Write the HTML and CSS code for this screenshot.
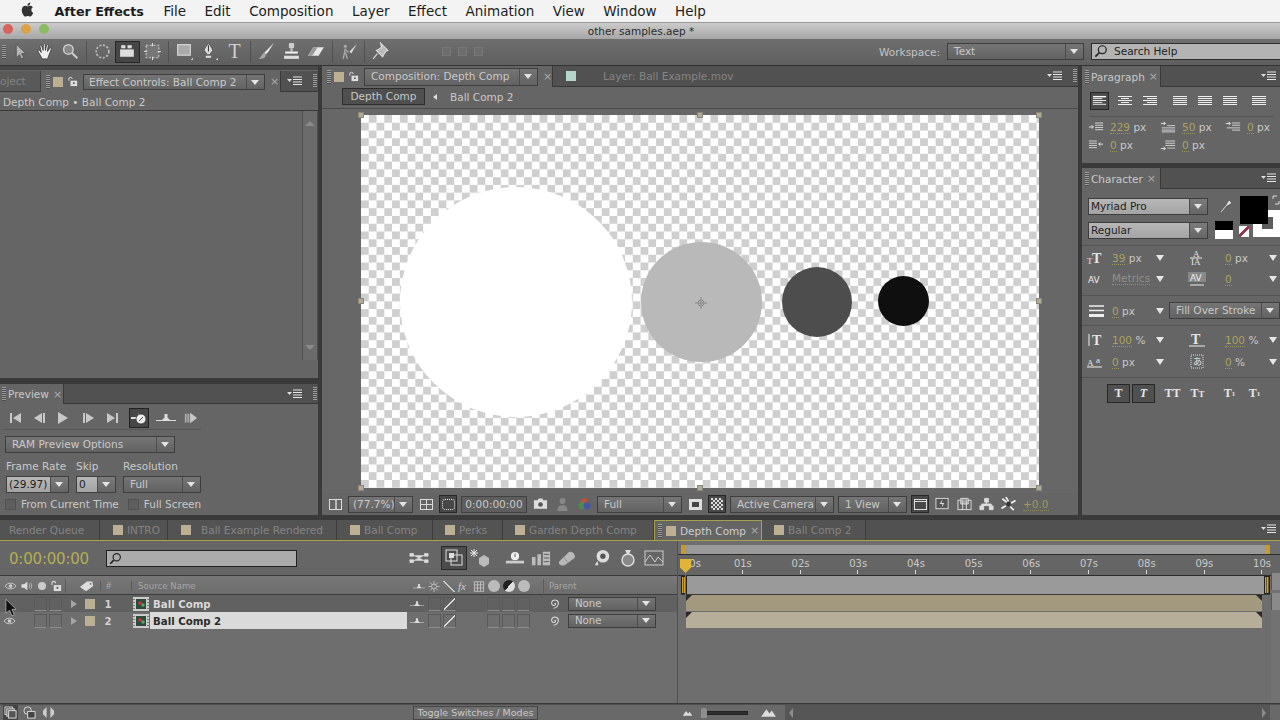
FILE: index.html
```html
<!DOCTYPE html>
<html lang="en">
<head>
  <meta charset="UTF-8" />
  <title>After Effects - other samples.aep</title>
  <meta name="viewport" content="width=device-width, initial-scale=1.0"/>
  <link rel="stylesheet" href="styles.css">
</head>
<body>

  <!-- shared icons -->
  <svg class="sprites" aria-hidden="true">
    <symbol id="i-apple" viewBox="0 0 24 24"><path d="M18.71 19.5c-.83 1.24-1.71 2.45-3.05 2.47-1.34.03-1.77-.79-3.29-.79-1.53 0-2 .77-3.27.82-1.31.05-2.3-1.32-3.14-2.53C4.25 17 2.94 12.45 4.7 9.39c.87-1.52 2.43-2.48 4.12-2.51 1.28-.02 2.5.87 3.29.87.78 0 2.26-1.07 3.8-.91.65.03 2.47.26 3.64 1.98-.09.06-2.17 1.28-2.15 3.81.03 3.02 2.65 4.03 2.68 4.04-.03.07-.42 1.44-1.38 2.83M13 3.5c.73-.83 1.94-1.46 2.94-1.5.13 1.17-.34 2.35-1.04 3.19-.69.85-1.83 1.51-2.95 1.42-.15-1.15.41-2.35 1.05-3.11z" fill="currentColor"/></symbol>
    <symbol id="i-arrow" viewBox="0 0 18 18"><path d="M5 2v13l3-3 2 4 2-1-2-4h4z" fill="#b4b4b4" stroke="#4a4a4a" stroke-width=".7"/></symbol>
    <symbol id="i-hand" viewBox="0 0 18 18"><path d="M6 16 2 9c-.5-1 1-1.800 1.800-.8L5 10 3.800 4c-.2-1.200 1.400-1.500 1.700-.3L6.800 8 7 2.500c0-1.300 1.700-1.300 1.700 0L9 8l1-5c.3-1.200 1.800-.9 1.600.3L10.800 9l2.200-3c.8-1 2-.1 1.400 1L12 13l-1 3z" fill="#eee" stroke="#333" stroke-width=".7"/></symbol>
    <symbol id="i-zoom" viewBox="0 0 18 18"><circle cx="7" cy="7" r="4.500" fill="#888" stroke="#ccc" stroke-width="1.400"/><path d="m10.500 10.500 5 5" stroke="#ccc" stroke-width="2"/></symbol>
    <symbol id="i-rotate" viewBox="0 0 18 18"><circle cx="9" cy="9" r="6" fill="none" stroke="#bbb" stroke-width="1.600" stroke-dasharray="2 1.500"/></symbol>
    <symbol id="i-camera" viewBox="0 0 18 18"><rect x="2" y="7" width="13" height="7" fill="#ddd"/><rect x="3" y="3" width="4" height="3" fill="#ddd"/><rect x="9" y="3" width="4" height="3" fill="#ddd"/></symbol>
    <symbol id="i-pan" viewBox="0 0 18 18"><rect x="3" y="3" width="12" height="12" fill="#777" stroke="#ccc" stroke-dasharray="2 1.500"/><path d="M1 9h3M14 9h3M9 1v3M9 14v3" stroke="#ddd"/></symbol>
    <symbol id="i-rect" viewBox="0 0 18 18"><rect x="2.500" y="2.500" width="12" height="10" fill="#aaa" stroke="#ddd"/><path d="M15 17h2v-2z" fill="#ddd"/></symbol>
    <symbol id="i-pen" viewBox="0 0 18 18"><path d="M8 1c1 2 4 5 4 7l-3 4H7L4 8c0-2 3-5 4-7z" fill="#ddd" stroke="#333" stroke-width=".6"/><path d="M8 3v6" stroke="#333"/><rect x="5.500" y="13" width="5" height="2" fill="#ddd"/><path d="M15 17h2v-2z" fill="#ddd"/></symbol>
    <symbol id="i-brush" viewBox="0 0 18 18"><path d="M16 1 9 8l-2 2 1.500 1.500 2-2z" fill="#eee"/><path d="M7 10c-2 .5-2 3-5 6 4 0 6.500-1.500 6.500-4.500z" fill="#aaa"/></symbol>
    <symbol id="i-stamp" viewBox="0 0 18 18"><rect x="6.500" y="1" width="5" height="5" rx="1" fill="#ccc"/><rect x="8" y="6" width="2" height="3" fill="#ccc"/><rect x="3" y="9" width="12" height="2" fill="#eee"/><rect x="2" y="13" width="14" height="3" fill="#ddd"/></symbol>
    <symbol id="i-eraser" viewBox="0 0 18 18"><path d="M6 5h10l-5 8H1z" fill="#e8e8e8"/><path d="M6 5 1 13h4l5-8z" fill="#999"/></symbol>
    <symbol id="i-roto" viewBox="0 0 18 18"><circle cx="6" cy="4" r="1.500" fill="#aaa"/><path d="M6 6 4 16M6 7l3 3M6 10l2 6" stroke="#aaa" stroke-width="1.300"/><path d="m17 2-7 7 1.500 2z" fill="#ddd"/></symbol>
    <symbol id="i-pin" viewBox="0 0 18 18"><path d="m9 1 7 7-2 1-2 3-1 2-6-6 2-1 3-2zM6 11l-4 5" fill="#bbb" stroke="#ddd"/></symbol>
    <symbol id="i-menu" viewBox="0 0 18 10"><path d="M2 3h5L4.500 6z" fill="#ddd"/><path d="M8 1h9M8 3.500h9M8 6h9M8 8.500h9" stroke="#e6e6e6"/></symbol>
    <symbol id="i-lock" viewBox="0 0 12 12"><rect x="3" y="5" width="8" height="6.500" fill="#ddd"/><rect x="6" y="7" width="2" height="2" fill="#555"/><path d="M1 5V3a2 2 0 0 1 4 0" fill="none" stroke="#ddd" stroke-width="1.200"/></symbol>
    <symbol id="i-search" viewBox="0 0 16 16"><circle cx="9.500" cy="6.500" r="4.500" fill="none" stroke="#222" stroke-width="1.400"/><path d="M6 10 1.500 14.500" stroke="#222" stroke-width="2"/></symbol>
    <symbol id="i-first" viewBox="0 0 14 12"><path d="M2 1h2v10H2zM13 1v10L5 6z" fill="#c8c8c8"/></symbol>
    <symbol id="i-prev" viewBox="0 0 14 12"><path d="M10 1v10L2 6zM11 1h2v10h-2z" fill="#c8c8c8"/></symbol>
    <symbol id="i-play" viewBox="0 0 14 12"><path d="M2 0v12l10-6z" fill="#c8c8c8"/></symbol>
    <symbol id="i-next" viewBox="0 0 14 12"><path d="M1 1h2v10H1zM4 1v10l8-5z" fill="#c8c8c8"/></symbol>
    <symbol id="i-last" viewBox="0 0 14 12"><path d="M1 1v10l8-5zM10 1h2v10h-2z" fill="#c8c8c8"/></symbol>
    <symbol id="i-loop" viewBox="0 0 16 14"><path d="M0 6h6l2-4v10L6 8H0z" fill="#ddd"/><circle cx="10" cy="8" r="5" fill="#eee" stroke="#222" stroke-width=".7"/><path d="m8 10 4-4M10 1l3 2" stroke="#444"/></symbol>
    <symbol id="i-audio" viewBox="0 0 20 10"><path d="M0 7h6l4-4 4 4h6v1H0zM8.500 1h3v3h-3z" fill="#ddd"/></symbol>
    <symbol id="i-ram" viewBox="0 0 16 12"><path d="M1 1h1v10H1zM3 1h1v10H3zM5 1h1v10H5zM7 0v12l8-6z" fill="#c8c8c8"/></symbol>
    <symbol id="i-left" viewBox="0 0 18 14"><rect x="2" y="1.500" width="14" height="2" fill="#fff" stroke="#333" stroke-width=".4"/><path d="M2 4.500h10M2 6.500h14M2 8.500h10M2 10.500h14" stroke="#eee"/></symbol>
    <symbol id="i-center" viewBox="0 0 18 14"><path d="M2 2.500h14M5 4.500h8M2 6.500h14M5 8.500h8M2 10.500h14" stroke="#eee"/></symbol>
    <symbol id="i-right" viewBox="0 0 18 14"><path d="M2 2.500h14M6 4.500h10M2 6.500h14M6 8.500h10M2 10.500h14" stroke="#eee"/></symbol>
    <symbol id="i-just" viewBox="0 0 18 14"><path d="M2 2.500h14M2 4.500h14M2 6.500h14M2 8.500h14M2 10.500h14" stroke="#eee"/></symbol>
    <symbol id="i-indl" viewBox="0 0 18 12"><path d="M1 6h5M4 4l2 2-2 2" stroke="#eee" fill="none"/><path d="M8 1.500h9M8 4h9M8 6.500h9M8 9h9" stroke="#ddd"/></symbol>
    <symbol id="i-indf" viewBox="0 0 18 12"><path d="M1 2h5M4 0l2 2-2 2" stroke="#eee" fill="none"/><path d="M8 4.500h9M2 7h15M2 9.500h15M2 11.500h15" stroke="#ddd"/></symbol>
    <symbol id="i-indt" viewBox="0 0 18 12"><path d="M1 2h5M4 0l2 2-2 2" stroke="#eee" fill="none"/><path d="M8 1.500h9M8 4h9M2 7h15M8 9.500h9" stroke="#ddd"/></symbol>
    <symbol id="i-indr" viewBox="0 0 18 12"><path d="M1 1.500h9M1 4h9M1 6.500h9M1 9h9" stroke="#ddd"/><path d="M17 5h-5M14 3l-2 2 2 2" stroke="#eee" fill="none"/></symbol>
    <symbol id="i-inda" viewBox="0 0 18 12"><path d="M1 10h5M4 8l2 2-2 2" stroke="#eee" fill="none"/><path d="M6 1.500h11M6 4h11M6 6.500h11" stroke="#ddd"/><path d="M8 9.500h9" stroke="#999" stroke-width="2"/></symbol>
    <symbol id="i-eye" viewBox="0 0 14 10"><path d="M1 5c3-4 9-4 12 0-3 4-9 4-12 0z" fill="none" stroke="#ccc"/><circle cx="7" cy="5" r="2" fill="#ccc"/></symbol>
    <symbol id="i-speaker" viewBox="0 0 14 12"><path d="M1 4h3l4-3v10L4 8H1z" fill="#ddd"/><path d="M10 3c1 2 1 4 0 6M12 2c1.500 2.500 1.500 5.500 0 8" stroke="#bbb" fill="none"/></symbol>
    <symbol id="i-tag" viewBox="0 0 18 14"><path d="M1 8 9 2h6l1 5-8 6z" fill="#ddd"/><circle cx="13" cy="4.500" r="1" fill="#666"/></symbol>
    <symbol id="i-comp" viewBox="0 0 16 14"><rect width="16" height="14" fill="#ccc"/><rect x="3" y="2" width="10" height="10" fill="#2d4a3a"/><circle cx="7" cy="6" r="1.800" fill="#c33"/><circle cx="10" cy="8" r="1.800" fill="#4a6"/><path d="M1 2v1M1 5v1M1 8v1M1 11v1M15 2v1M15 5v1M15 8v1M15 11v1" stroke="#333"/></symbol>
    <symbol id="i-spiral" viewBox="0 0 14 14"><path d="M7 7c1-1 2 1 0 2-3 1-4-3-2-5 3-2 7 0 6 4-1 3-3 4-5 4" fill="none" stroke="#ddd" stroke-width="1.100"/></symbol>
    <symbol id="i-star" viewBox="0 0 14 14"><circle cx="7" cy="7" r="3" fill="none" stroke="#ccc"/><path d="M7 0v4M7 10v4M0 7h4M10 7h4M2 2l3 3M9 9l3 3M12 2 9 5M5 9l-3 3" stroke="#ccc"/></symbol>
    <symbol id="i-film" viewBox="0 0 14 14"><rect x="1" y="1" width="12" height="12" fill="none" stroke="#ccc"/><path d="M1 5h12M1 9h12M5 1v12M9 1v12" stroke="#ccc"/></symbol>
    <symbol id="i-pill" viewBox="0 0 24 20"><path d="m3 14 11-11c4-2 9 3 7 7L10 18c-4 3-10-1-7-4z" fill="#b8b8b8"/><path d="M8 9c2 2 4 5 5 6" stroke="#888" fill="none"/></symbol>
    <symbol id="i-mount" viewBox="0 0 16 10"><path d="M1 9 6 2l3 4 2-3 4 6z" fill="#ddd"/></symbol>
    <symbol id="i-scene" viewBox="0 0 20 16"><rect x="1" y="1" width="18" height="14" fill="none" stroke="#ccc"/><path d="m1 12 5-7 5 7 3-5 5 5" fill="none" stroke="#ccc"/></symbol>
  </svg>

  <div class="menubar">
    <svg class="apple"><use href="#i-apple"/></svg>
    <span class="app-name">After Effects</span>
    <span>File</span><span>Edit</span><span>Composition</span><span>Layer</span>
    <span>Effect</span><span>Animation</span><span>View</span><span>Window</span><span>Help</span>
  </div>

  <div class="titlebar">
    <div class="lights"><i class="light red"></i><i class="light amber"></i><i class="light green"></i></div>
    <span class="doc-title">other samples.aep *</span>
  </div>

  <div class="toolbar">
    <span class="grip"></span>
    <div class="tools">
      <span class="tool"><svg><use href="#i-arrow"/></svg></span>
      <span class="tool"><svg><use href="#i-hand"/></svg></span>
      <span class="tool"><svg><use href="#i-zoom"/></svg></span>
    </div>
    <div class="tools">
      <span class="tool"><svg><use href="#i-rotate"/></svg></span>
      <span class="tool on"><svg><use href="#i-camera"/></svg></span>
      <span class="tool"><svg><use href="#i-pan"/></svg></span>
    </div>
    <div class="tools">
      <span class="tool"><svg><use href="#i-rect"/></svg></span>
      <span class="tool"><svg><use href="#i-pen"/></svg></span>
      <span class="tool type-tool">T</span>
    </div>
    <div class="tools">
      <span class="tool"><svg><use href="#i-brush"/></svg></span>
      <span class="tool"><svg><use href="#i-stamp"/></svg></span>
      <span class="tool"><svg><use href="#i-eraser"/></svg></span>
    </div>
    <div class="tools"><span class="tool"><svg><use href="#i-roto"/></svg></span></div>
    <div class="tools last"><span class="tool"><svg><use href="#i-pin"/></svg></span></div>
    <div class="axis-modes"><i></i><i></i><i></i></div>
    <span class="workspace-label">Workspace:</span>
    <div class="dd workspace-dd"><span class="dd-text">Text</span><span class="dd-arrow"></span></div>
    <div class="help-search"><svg><use href="#i-search"/></svg><span>Search Help</span></div>
  </div>

  <div class="workspace">

    <!-- left column -->
    <div class="left-col">
      <section class="panel effects">
        <div class="tabbar">
          <span class="tab dim project-tab">oject</span>
          <div class="tab active fx-tab">
            <span class="grip"></span>
            <i class="swatch"></i>
            <svg class="lock"><use href="#i-lock"/></svg>
            <div class="dd fx-dd"><span class="dd-text">Effect Controls: Ball Comp 2</span><span class="dd-arrow"></span></div>
            <span class="close">×</span>
          </div>
          <svg class="panel-menu"><use href="#i-menu"/></svg>
          <span class="grip end"></span>
        </div>
        <div class="crumb">Depth Comp • Ball Comp 2</div>
        <div class="fx-body">
          <div class="fx-list"></div>
          <div class="vscroll"><i class="up"></i><i class="down"></i></div>
        </div>
      </section>

      <section class="panel preview">
        <div class="tabbar">
          <div class="tab active preview-tab"><span class="grip"></span>Preview <span class="close">×</span></div>
          <svg class="panel-menu"><use href="#i-menu"/></svg>
          <span class="grip end"></span>
        </div>
        <div class="transport">
          <span class="ctl"><svg><use href="#i-first"/></svg></span>
          <span class="ctl"><svg><use href="#i-prev"/></svg></span>
          <span class="ctl"><svg><use href="#i-play"/></svg></span>
          <span class="ctl push"><svg><use href="#i-next"/></svg></span>
          <span class="ctl"><svg><use href="#i-last"/></svg></span>
          <span class="ctl loop"><svg><use href="#i-loop"/></svg></span>
          <span class="ctl wide"><svg class="audio"><use href="#i-audio"/></svg></span>
          <span class="ctl"><svg><use href="#i-ram"/></svg></span>
        </div>
        <div class="dd ram-dd"><span class="dd-text">RAM Preview Options</span><span class="dd-arrow"></span></div>
        <div class="rate-grid">
          <label>Frame Rate</label><label>Skip</label><label>Resolution</label>
          <div class="dd light-dd"><span class="dd-text">(29.97)</span><span class="dd-arrow"></span></div>
          <div class="dd light-dd"><span class="dd-text">0</span><span class="dd-arrow"></span></div>
          <div class="dd"><span class="dd-text">Full</span><span class="dd-arrow"></span></div>
        </div>
        <div class="checks">
          <i class="check"></i><span>From Current Time</span>
          <i class="check"></i><span>Full Screen</span>
        </div>
      </section>
    </div>

    <!-- composition viewer -->
    <section class="panel comp">
      <div class="tabbar comp-tabs">
        <div class="tab active comp-tab">
          <span class="grip"></span>
          <i class="swatch"></i>
          <svg class="lock"><use href="#i-lock"/></svg>
          <div class="dd comp-dd"><span class="dd-text">Composition: Depth Comp</span><span class="dd-arrow"></span></div>
          <span class="close">×</span>
        </div>
        <div class="tab dim layer-tab"><i class="swatch mint"></i><span>Layer: Ball Example.mov</span></div>
        <svg class="panel-menu"><use href="#i-menu"/></svg>
        <span class="grip end"></span>
      </div>
      <div class="comp-crumbs">
        <span class="crumb-btn">Depth Comp</span>
        <i class="tri-left"></i>
        <span>Ball Comp 2</span>
      </div>
      <div class="viewer">
        <div class="canvas">
          <i class="handle tl"></i><i class="handle tc"></i><i class="handle tr"></i>
          <i class="handle ml"></i><i class="handle mr"></i>
          <i class="handle bl"></i><i class="handle bc"></i><i class="handle br"></i>
          <i class="ball ball-white"></i>
          <i class="ball ball-grey"></i>
          <i class="ball ball-dark"></i>
          <i class="ball ball-black"></i>
          <svg class="anchor" viewBox="0 0 12 12"><circle cx="6" cy="6" r="3" fill="none" stroke="#888"/><path d="M6 0v12M0 6h12" stroke="#888"/></svg>
        </div>
      </div>
      <div class="viewer-bar">
        <span class="vb"><i class="ic-region"></i></span>
        <div class="dd zoom-dd"><span class="dd-text">(77.7%)</span><span class="dd-arrow"></span></div>
        <span class="vb"><i class="ic-grid"></i></span>
        <span class="vb on"><i class="ic-mask"></i></span>
        <span class="time-box">0:00:00:00</span>
        <span class="vb"><svg viewBox="0 0 16 12"><path d="M1 2h4l1-2h4l1 2h4v9H1z" fill="#ddd"/><circle cx="8" cy="6.500" r="2.500" fill="#555"/></svg></span>
        <span class="vb"><svg viewBox="0 0 14 14"><circle cx="7" cy="4" r="3" fill="#888"/><path d="M2 14c0-4 2-6 5-6s5 2 5 6z" fill="#888"/></svg></span>
        <span class="vb"><svg viewBox="0 0 16 16"><circle cx="8" cy="5" r="4" fill="#b5563c"/><circle cx="5" cy="10" r="4" fill="#4b8b4e"/><circle cx="11" cy="10" r="4" fill="#4a55a8"/></svg></span>
        <div class="dd res-dd"><span class="dd-text">Full</span><span class="dd-arrow"></span></div>
        <span class="vb"><i class="ic-fast"></i></span>
        <span class="vb on"><i class="ic-checker"></i></span>
        <div class="dd cam-dd"><span class="dd-text">Active Camera</span><span class="dd-arrow"></span></div>
        <div class="dd view-dd"><span class="dd-text">1 View</span><span class="dd-arrow"></span></div>
        <span class="vb on"><i class="ic-frame"></i></span>
        <span class="vb"><svg viewBox="0 0 16 14"><rect x="1" y="1" width="13" height="11" fill="#555" stroke="#ddd"/><path d="m8 2-3 5h3l-1 4 3-5H7z" fill="#ddd"/></svg></span>
        <span class="vb"><svg viewBox="0 0 16 14"><rect x="1" y="3" width="14" height="10" fill="none" stroke="#ddd"/><path d="M4 1h8v6H4zM6 3v10M10 3v10" fill="#999" stroke="#ddd"/></svg></span>
        <span class="vb"><svg viewBox="0 0 16 14"><path d="M6 1h4v4H6zM1 9h4v4H1zM11 9h4v4h-4zM8 5v2M3 9V7h10v2" fill="#ddd" stroke="#ddd"/></svg></span>
        <span class="vb"><svg viewBox="0 0 16 16"><circle cx="8" cy="8" r="2.500" fill="#333"/><path d="M8 5 5 0M11 7l5-3M10 11l4 4M5 10l-5 3M1 2l5 4" stroke="#eee" stroke-width="2"/></svg></span>
        <span class="exposure">+0.0</span>
      </div>
    </section>

    <!-- right column -->
    <div class="right-col">
      <section class="panel paragraph">
        <div class="tabbar">
          <div class="tab active"><span class="grip"></span>Paragraph <span class="close">×</span></div>
          <svg class="panel-menu"><use href="#i-menu"/></svg>
        </div>
        <div class="align-row">
          <span class="abtn on"><svg><use href="#i-left"/></svg></span>
          <span class="abtn"><svg><use href="#i-center"/></svg></span>
          <span class="abtn"><svg><use href="#i-right"/></svg></span>
          <span class="abtn gap"><svg><use href="#i-just"/></svg></span>
          <span class="abtn"><svg><use href="#i-just"/></svg></span>
          <span class="abtn"><svg><use href="#i-just"/></svg></span>
          <span class="abtn gap"><svg><use href="#i-just"/></svg></span>
        </div>
        <div class="para-grid">
          <svg><use href="#i-indl"/></svg><span><b class="num">229</b> px</span>
          <svg><use href="#i-indf"/></svg><span><b class="num">50</b> px</span>
          <svg><use href="#i-indt"/></svg><span><b class="num">0</b> px</span>
          <svg><use href="#i-indr"/></svg><span><b class="num">0</b> px</span>
          <svg><use href="#i-inda"/></svg><span><b class="num">0</b> px</span>
        </div>
      </section>

      <section class="panel character">
        <div class="tabbar">
          <div class="tab active"><span class="grip"></span>Character <span class="close">×</span></div>
          <svg class="panel-menu"><use href="#i-menu"/></svg>
        </div>
        <div class="font-block">
          <div class="dd light-dd font-dd"><span class="dd-text">Myriad Pro</span><span class="dd-arrow"></span></div>
          <div class="dd light-dd font-dd"><span class="dd-text">Regular</span><span class="dd-arrow"></span></div>
          <svg class="dropper" viewBox="0 0 14 16"><path d="m10 1 3 3-3 2-2 1-6 7-1-1 6-7 1-2z" fill="#ddd" stroke="#333" stroke-width=".5"/></svg>
          <i class="fill-stroke black"></i><i class="fill-stroke white"></i>
          <i class="stroke-none"></i>
          <i class="color-back"></i><i class="color-front"></i><i class="color-notch"></i>
          <svg class="swap" viewBox="0 0 8 10"><path d="M1 4V1h4M7 6v3H3" fill="none" stroke="#ddd"/></svg>
        </div>
        <div class="char-rows">
          <svg class="ci" viewBox="0 0 18 16"><text x="5" y="13" class="t-lg">T</text><text x="0" y="14" class="t-sm">T</text></svg><span><b class="num">39</b> px</span><i class="tri"></i>
          <svg class="ci" viewBox="0 0 18 16"><text x="5" y="7" class="t-sm">A</text><text x="3" y="15" class="t-sm">IA</text><path d="M2 8h12" stroke="#eee"/></svg><span><b class="num">0</b> px</span><i class="tri"></i>

          <svg class="ci" viewBox="0 0 18 16"><text x="1" y="12" class="t-av">AV</text></svg><span class="metrics">Metrics</span><i class="tri"></i>
          <svg class="ci" viewBox="0 0 18 16"><rect y="1" width="18" height="10" fill="#888"/><text x="2" y="10" class="t-av">AV</text><path d="M2 14h14" stroke="#eee"/></svg><span><b class="num">0</b></span><i class="tri"></i>
        </div>
        <div class="stroke-row">
          <svg class="ci" viewBox="0 0 18 14"><path d="M2 2h15M2 6.500h15" stroke="#eee" stroke-width="1.500"/><path d="M2 11.500h15" stroke="#eee" stroke-width="3"/></svg>
          <span><b class="num">0</b> px</span><i class="tri"></i>
          <div class="dd stroke-dd"><span class="dd-text">Fill Over Stroke</span><span class="dd-arrow"></span></div>
        </div>
        <div class="char-rows scale-rows">
          <svg class="ci" viewBox="0 0 18 16"><text x="5" y="13" class="t-lg">T</text><path d="M2 2v12" stroke="#eee"/></svg><span><b class="num">100</b> %</span><i class="tri"></i>
          <svg class="ci" viewBox="0 0 18 16"><text x="3" y="12" class="t-lg">T</text><path d="M1 14h16" stroke="#eee"/></svg><span><b class="num">100</b> %</span><i class="tri"></i>

          <svg class="ci" viewBox="0 0 18 16"><text x="0" y="12" class="t-sm">A</text><text x="9" y="9" class="t-sm">a</text><path d="M0 13h15" stroke="#eee"/></svg><span><b class="num">0</b> px</span><i class="tri"></i>
          <svg class="ci" viewBox="0 0 18 16"><rect x="3" y="1" width="12" height="13" fill="none" stroke="#ddd" stroke-dasharray="1 1"/><text x="5" y="11" class="t-sm">あ</text></svg><span><b class="num">0</b> %</span><i class="tri"></i>
        </div>
        <div class="style-row">
          <span class="sbtn on">T</span><span class="sbtn on ital">T</span>
          <span class="sbtn">TT</span><span class="sbtn caps">T<small>T</small></span>
          <span class="sbtn far">T<sup>1</sup></span><span class="sbtn">T<sub>1</sub></span>
        </div>
      </section>
    </div>
  </div>

  <!-- timeline -->
  <div class="tl-tabs">
    <span class="tl-tab first">Render Queue</span>
    <span class="tl-tab t-intro"><i class="swatch"></i>INTRO</span>
    <span class="tl-tab t-example"><i class="swatch"></i>Ball Example Rendered</span>
    <span class="tl-tab t-ball"><i class="swatch"></i>Ball Comp</span>
    <span class="tl-tab t-perks"><i class="swatch"></i>Perks</span>
    <span class="tl-tab t-garden"><i class="swatch"></i>Garden Depth Comp</span>
    <span class="tl-tab current"><span class="grip"></span><i class="swatch"></i>Depth Comp <span class="close">×</span></span>
    <span class="tl-tab t-ball2"><i class="swatch"></i>Ball Comp 2</span>
    <svg class="panel-menu"><use href="#i-menu"/></svg>
  </div>

  <div class="timeline">
    <div class="tl-left">
      <div class="tl-controls">
        <span class="timecode">0:00:00:00</span>
        <div class="layer-search"><svg><use href="#i-search"/></svg></div>
        <div class="tl-switches">
          <span class="sw"><svg viewBox="0 0 22 14"><path d="M1 2h4v3H1zM1 9h4v3H1zM17 2h4v3h-4zM17 9h4v3h-4zM5 4l6 3 6-3M5 10l6-3 6 3" fill="#ddd" stroke="#ddd" stroke-width=".8"/></svg></span>
          <span class="sw on sep"><svg viewBox="0 0 18 18"><rect x="1" y="1" width="11" height="11" fill="none" stroke="#ddd"/><rect x="6" y="6" width="11" height="10" fill="none" stroke="#ddd"/><rect x="4" y="4" width="5" height="5" fill="#ddd"/></svg></span>
          <span class="sw"><svg viewBox="0 0 20 18"><path d="M4 0v8M0 4h8M1 1l6 6M7 1 1 7" stroke="#eee"/><path d="m9 9 5-3 5 3v6l-5 3-5-3z" fill="#bbb"/></svg></span>
          <span class="sw sep"><svg viewBox="0 0 22 16"><circle cx="11" cy="6" r="4.500" fill="#eee"/><path d="M1 11h20v3H1z" fill="#ccc"/><path d="M11 3v4" stroke="#555"/></svg></span>
          <span class="sw"><svg viewBox="0 0 22 18"><path d="M1 8h4v9H1zM7 5h4v12H7zM13 2h8v15h-8z" fill="#bbb"/><path d="M14 5h6M14 9h6M14 13h6" stroke="#555"/></svg></span>
          <span class="sw"><svg><use href="#i-pill"/></svg></span>
          <span class="sw sep"><svg viewBox="0 0 20 20"><circle cx="11" cy="8" r="7" fill="#ddd"/><circle cx="11" cy="8" r="3" fill="#555"/><path d="M5 13 2 18h4z" fill="#ddd"/></svg></span>
          <span class="sw"><svg viewBox="0 0 16 18"><circle cx="8" cy="11" r="6" fill="#888" stroke="#ddd" stroke-width="1.500"/><path d="M5 1h6l-2 4H7z" fill="#ddd"/></svg></span>
          <span class="sw"><svg><use href="#i-scene"/></svg></span>
        </div>
      </div>

      <div class="col-head">
        <div class="head-a">
          <svg><use href="#i-eye"/></svg>
          <svg><use href="#i-speaker"/></svg>
          <i class="dot"></i>
          <svg class="lk"><use href="#i-lock"/></svg>
        </div>
        <svg class="tag"><use href="#i-tag"/></svg>
        <span class="hash">#</span>
        <span class="src-name">Source Name</span>
        <div class="head-b">
          <svg><use href="#i-audio"/></svg>
          <svg><use href="#i-star"/></svg>
          <i class="slash"></i>
          <em>fx</em>
          <svg><use href="#i-film"/></svg>
          <i class="round lt"></i>
          <i class="round half"></i>
          <i class="round lt"></i>
        </div>
        <span class="parent-label">Parent</span>
      </div>

      <div class="layer odd">
        <i class="box clear"></i><i class="box clear"></i><i class="box"></i><i class="box"></i>
        <i class="twirl"></i><i class="swatch"></i><b class="idx">1</b>
        <svg class="comp-ic"><use href="#i-comp"/></svg>
        <span class="lname">Ball Comp</span>
        <svg class="shy"><use href="#i-audio"/></svg>
        <i class="box"></i>
        <i class="box slashed"></i>
        <i></i>
        <i class="box"></i><i class="box"></i><i class="box"></i>
        <i></i>
        <svg class="spiral"><use href="#i-spiral"/></svg>
        <div class="dd parent-dd"><span class="dd-text">None</span><span class="dd-arrow"></span></div>
      </div>
      <div class="layer">
        <svg class="eye"><use href="#i-eye"/></svg><i class="box clear"></i><i class="box"></i><i class="box"></i>
        <i class="twirl"></i><i class="swatch"></i><b class="idx">2</b>
        <svg class="comp-ic"><use href="#i-comp"/></svg>
        <span class="lname sel">Ball Comp 2</span>
        <svg class="shy"><use href="#i-audio"/></svg>
        <i class="box"></i>
        <i class="box slashed"></i>
        <i></i>
        <i class="box"></i><i class="box"></i><i class="box"></i>
        <i></i>
        <svg class="spiral"><use href="#i-spiral"/></svg>
        <div class="dd parent-dd"><span class="dd-text">None</span><span class="dd-arrow"></span></div>
      </div>
    </div>

    <div class="tl-right">
      <div class="work-bar"><i class="cap"></i><i class="cap"></i></div>
      <div class="ruler">
        <span>00s</span><span>01s</span><span>02s</span><span>03s</span><span>04s</span><span>05s</span>
        <span>06s</span><span>07s</span><span>08s</span><span>09s</span><span>10s</span>
      </div>
      <div class="work-area"><i class="cap tall"></i><i class="cap tall"></i></div>
      <div class="track odd"><div class="clip"></div></div>
      <div class="track"><div class="clip lite"></div></div>
      <div class="rail"><i class="rail-btn"></i><i class="rail-btn"></i></div>
    </div>

    <!-- current time indicator -->
    <div class="playhead"><i class="cti"></i></div>
  </div>

  <div class="statusbar">
    <div class="status-icons">
      <span class="sq on"><svg viewBox="0 0 14 14"><rect x="1" y="1" width="8" height="8" fill="none" stroke="#ddd"/><rect x="3" y="3" width="8" height="8" fill="#666" stroke="#ddd"/><rect x="5" y="5" width="8" height="8" fill="#555" stroke="#ddd"/></svg></span>
      <span class="sq"><svg viewBox="0 0 14 14"><circle cx="5" cy="5" r="4" fill="none" stroke="#ddd"/><rect x="5" y="6" width="8" height="7" fill="#444" stroke="#ddd"/></svg></span>
      <span class="sq"><svg viewBox="0 0 14 14"><path d="M5 1 1 5v4l4 4zM9 1l4 4v4l-4 4z" fill="#ccc"/></svg></span>
    </div>
    <span class="toggle-btn">Toggle Switches / Modes</span>
    <div class="tl-zoom">
      <svg class="m-sm"><use href="#i-mount"/></svg>
      <div class="slider"><i></i></div>
      <svg class="m-lg"><use href="#i-mount"/></svg>
    </div>
    <div class="hscroll"><i class="sl"></i><i class="sr"></i></div>
  </div>

  <!-- mouse pointer from the recording -->
  <svg class="pointer" viewBox="0 0 14 20"><path d="M1 1v15l4-3 2.500 6 2.500-1-2.500-6H12z" fill="#111" stroke="#ddd" stroke-width=".6"/></svg>

</body>
</html>
```

FILE: styles.css
```css
* {
  box-sizing: border-box;
}
html, body {
  margin: 0;
  padding: 0;
}
body {
  width: 1280px;
  height: 720px;
  overflow: hidden;
  position: relative;
  background: #3a3a3a;
  font-family: 'DejaVu Sans', sans-serif;
  font-size: 10.5px;
  color: #c9c9c9;
}
svg {
  display: block;
}
.sprites {
  display: none;
}
i {
  font-style: normal;
}

/* system bars */
.menubar {
  height: 23px;
  background: #f3f3f3;
  border-bottom: 1px solid #9a9a9a;
  display: flex;
  align-items: center;
  gap: 18.5px;
  padding-left: 19px;
  font-size: 13.5px;
  color: #1c1c1c;
}
.apple {
  width: 17px;
  height: 17px;
  color: #333;
  margin-top: -3px;
}
.app-name {
  font-weight: bold;
  font-size: 12.7px;
  margin-right: 1px;
}
.titlebar {
  height: 17px;
  background: linear-gradient(#cbcbcb, #a6a6a6);
  border-bottom: 1px solid #6d6d6d;
  position: relative;
  display: flex;
  justify-content: center;
  align-items: center;
  font-size: 10.5px;
  color: #2b2b2b;
}
.lights {
  position: absolute;
  left: 3px;
  top: 1px;
  display: flex;
  gap: 8px;
}
.light {
  width: 10px;
  height: 10px;
  border-radius: 50%;
}
.light.red { background: #d9625d; }
.light.amber { background: #dca24a; }
.light.green { background: #8fbb62; }
.doc-title {
  margin-left: 2px;
}

.toolbar {
  height: 25px;
  background: linear-gradient(#6e6e6e, #5f5f5f);
  display: flex;
  align-items: center;
  padding: 0 0 2px 2px;
}
.grip {
  width: 4px;
  height: 14px;
  flex: none;
  background: repeating-linear-gradient(#a0a0a0 0 1px, #4d4d4d 1px 2px);
}
.tools {
  display: flex;
  padding-right: 3px;
  margin-right: 3px;
  border-right: 1px solid #525252;
  height: 22px;
}
.toolbar > .grip + .tools {
  margin-left: 2px;
}
.tools.last {
  border-right: 0;
}
.tool {
  width: 25px;
  height: 22px;
  display: flex;
  justify-content: center;
  align-items: center;
}
.tool svg {
  width: 19px;
  height: 19px;
}
.tool.on {
  background: #464646;
  border: 1px solid #262626;
}
.type-tool {
  font-family: 'Liberation Serif', serif;
  font-size: 20px;
  color: #d0d0d0;
}
.axis-modes {
  display: flex;
  gap: 7px;
  margin-left: 43px;
}
.axis-modes i {
  width: 9px;
  height: 9px;
  background: #6d6d6d;
  border: 1px solid #777;
}
.workspace-label {
  margin-left: auto;
  margin-right: 7px;
  color: #c4c4c4;
}
.workspace-dd {
  width: 137px;
  margin-right: 7px;
}
.help-search {
  width: 189px;
  height: 17px;
  background: #b4b4b4;
  border: 1px solid #2e2e2e;
  border-right: 0;
  display: flex;
  align-items: center;
  gap: 6px;
  padding-left: 2px;
  color: #222;
  margin-top: -1px;
}
.help-search svg {
  width: 14px;
  height: 14px;
}

/* dropdowns */
.dd {
  height: 17px;
  display: flex;
  align-items: stretch;
  background: linear-gradient(#757575, #626262);
  border: 1px solid #3e3e3e;
  color: #c9c9c9;
}
.dd-text {
  flex: 1;
  padding-left: 6px;
  line-height: 15px;
  white-space: nowrap;
  overflow: hidden;
}
.dd-arrow {
  width: 18px;
  flex: none;
  position: relative;
  border-left: 1px solid #4d4d4d;
}
.dd-arrow::after {
  content: "";
  position: absolute;
  left: 4px;
  top: 5px;
  border: 4px solid transparent;
  border-top: 5px solid #e4e4e4;
  border-bottom: 0;
}
.light-dd .dd-text {
  padding-left: 2px;
  background: linear-gradient(#b7b7b7, #a4a4a4);
  color: #222;
}
.light-dd .dd-arrow {
  background: linear-gradient(#7b7b7b, #666);
}

/* panels */
.workspace {
  height: 450px;
  display: grid;
  grid-template-columns: 318px 756px 198px;
  column-gap: 4px;
  border-top: 1px solid #333;
}
.panel {
  background: #656565;
  display: flex;
  flex-direction: column;
  min-height: 0;
}
.tabbar {
  height: 21px;
  flex: none;
  background: #515151;
  border-bottom: 1px solid #383838;
  display: flex;
  align-items: stretch;
  position: relative;
}
.tab {
  display: flex;
  align-items: center;
  white-space: nowrap;
}
.tab.active {
  background: #656565;
  border-right: 1px solid #3a3a3a;
  margin-bottom: -1px;
  padding-right: 5px;
  gap: 5px;
}
.tab.active > .grip {
  margin-right: -2px;
}
.tab.dim {
  color: #848484;
}
.close {
  color: #a9a9a9;
  font-size: 11px;
}
.panel-menu {
  width: 18px;
  height: 10px;
  position: absolute;
  right: 15px;
  top: 5px;
}
.grip.end {
  position: absolute;
  right: 1px;
  top: 3px;
}
.swatch {
  width: 10px;
  height: 10px;
  flex: none;
  background: #bdaf93;
}
.swatch.mint {
  background: #b5d4cc;
}
.lock {
  width: 10px;
  height: 11px;
  flex: none;
}

.left-col {
  display: flex;
  flex-direction: column;
  gap: 6px;
  min-height: 0;
}
.effects {
  height: 312px;
  padding-top: 5px;
  background: linear-gradient(#484848 0 4px, #656565 4px);
}
.project-tab {
  width: 41px;
  background: #595959;
  border-right: 1px solid #414141;
}
.fx-tab {
  padding-left: 5px;
  width: 240px;
}
.fx-dd {
  width: 182px;
  height: 16px;
  flex: none;
}
.fx-dd .dd-text {
  padding-left: 5px;
  line-height: 14px;
}
.crumb {
  height: 19px;
  flex: none;
  padding: 4px 3px 0;
  border-bottom: 1px solid #393939;
}
.fx-body {
  flex: 1;
  display: flex;
}
.fx-list {
  flex: 1;
}
.vscroll {
  width: 16px;
  margin-bottom: 18px;
  background: #6b6b6b;
  border-left: 1px solid #4f4f4f;
  border-right: 1px solid #4f4f4f;
  display: flex;
  flex-direction: column;
  justify-content: space-between;
  padding: 5px 2px;
}
.up, .down {
  border: 5px solid transparent;
  width: 0;
  height: 0;
}
.up { border-bottom-color: #8a8a8a; }
.down { border-top-color: #8a8a8a; }

.preview {
  flex: 1;
}
.preview .tabbar {
  height: 20px;
}
.preview-tab {
  width: 64px;
  padding-left: 2px;
  gap: 4px !important;
}
.transport {
  display: flex;
  align-items: center;
  margin: 2px 117px 0 3px;
  height: 24px;
  border-bottom: 1px solid #555;
}
.ctl {
  width: 24px;
  height: 20px;
  flex: none;
  display: flex;
  justify-content: center;
  align-items: center;
}
.ctl.push {
  margin-left: 2px;
}
.ctl.wide {
  width: 26px;
}
.ctl svg {
  width: 14px;
  height: 12px;
}
.ctl.loop {
  background: #474747;
  border: 1px solid #222;
  width: 20px;
  margin: 0 4px;
}
.ctl.loop svg {
  width: 16px;
  height: 14px;
}
.ctl .audio {
  width: 20px;
  height: 10px;
}
.ram-dd {
  width: 170px;
  margin: 6px 0 0 5px;
}
.rate-grid {
  display: grid;
  grid-template-columns: 63px 40px 78px;
  column-gap: 7px;
  row-gap: 3px;
  margin: 6px 0 0 6px;
  line-height: 14px;
}
.checks {
  display: flex;
  align-items: center;
  margin: 5px 0 0 5px;
  gap: 5px;
}
.check {
  width: 11px;
  height: 11px;
  border: 1px solid #505050;
  background: #5e5e5e;
}
.checks .check:nth-of-type(2) {
  margin-left: 4px;
}

/* composition */
.comp-tab {
  width: 231px;
  padding-left: 5px;
}
.comp-dd {
  width: 174px;
  height: 18px;
  flex: none;
}
.layer-tab {
  padding-left: 13px;
  gap: 27px;
}
.comp-crumbs {
  height: 22px;
  flex: none;
  display: flex;
  align-items: center;
  padding: 0 0 2px 20px;
  border-bottom: 1px solid #4c4c4c;
}
.crumb-btn {
  width: 83px;
  height: 17px;
  background: #4f4f4f;
  border: 1px solid #2d2d2d;
  text-align: center;
  line-height: 15px;
}
.tri-left {
  border: 3px solid transparent;
  border-right: 4px solid #ddd;
  border-left: 0;
  margin: 0 13px 0 8px;
}
.viewer {
  flex: 1;
  display: flex;
  justify-content: center;
  align-items: flex-start;
  padding-top: 6px;
  background: #676767;
  min-height: 0;
}
.canvas {
  width: 678px;
  height: 373px;
  position: relative;
  background-color: #fff;
  background-image: conic-gradient(#cfcfcf 25%, #fff 0 50%, #cfcfcf 0 75%, #fff 0);
  background-size: 15.54px 15.54px;
}
.handle {
  position: absolute;
  width: 6px;
  height: 6px;
  background: #b1ab97;
  border: 1px solid #8a8678;
}
.handle.tl { left: -3px; top: -3px; }
.handle.tc { left: 336px; top: -3px; }
.handle.tr { right: -3px; top: -3px; }
.handle.ml { left: -3px; top: 183px; }
.handle.mr { right: -3px; top: 183px; }
.handle.bl { left: -3px; bottom: -3px; }
.handle.bc { left: 336px; bottom: -3px; }
.handle.br { right: -3px; bottom: -3px; }
.ball {
  position: absolute;
  border-radius: 50%;
}
.ball-white {
  left: 39px;
  top: 72px;
  width: 232px;
  height: 230px;
  background: #fff;
}
.ball-grey {
  left: 280px;
  top: 127px;
  width: 121px;
  height: 120px;
  background: #b9b9b9;
}
.ball-dark {
  left: 421px;
  top: 152px;
  width: 70px;
  height: 70px;
  background: #4d4d4d;
}
.ball-black {
  left: 517px;
  top: 161px;
  width: 51px;
  height: 50px;
  background: #0f0f0f;
}
.anchor {
  position: absolute;
  left: 334px;
  top: 182px;
  width: 12px;
  height: 12px;
}
.viewer-bar {
  height: 22px;
  flex: none;
  display: flex;
  align-items: center;
  gap: 4px;
  padding-left: 4px;
  background: #656565;
}
.vb {
  width: 18px;
  height: 18px;
  flex: none;
  display: flex;
  justify-content: center;
  align-items: center;
}
.vb svg {
  width: 15px;
  height: 14px;
}
.vb.on {
  background: #474747;
  border: 1px solid #272727;
}
.vb i {
  display: block;
}
.ic-region {
  width: 13px;
  height: 11px;
  border: 1px solid #ddd;
  background: linear-gradient(90deg, transparent 0 50%, #bbb 50% 60%, transparent 60%);
}
.ic-grid {
  width: 13px;
  height: 11px;
  border: 1px solid #ddd;
  background: linear-gradient(#ddd, #ddd) center / 100% 1px no-repeat, linear-gradient(#ddd, #ddd) center / 1px 100% no-repeat;
}
.ic-mask {
  width: 13px;
  height: 11px;
  border: 1px dotted #eee;
  border-radius: 3px;
}
.ic-fast {
  width: 13px;
  height: 11px;
  background: #ddd;
  border: 3px solid #ddd;
  box-shadow: inset 0 0 0 5px #444;
}
.ic-checker {
  width: 12px;
  height: 12px;
  background: conic-gradient(#555 25%, #ddd 0 50%, #555 0 75%, #ddd 0) 0 0 / 4px 4px;
}
.ic-frame {
  width: 13px;
  height: 11px;
  border: 1px solid #ddd;
  border-top: 3px double #ddd;
}
.time-box {
  width: 66px;
  height: 17px;
  background: #5e5e5e;
  border: 1px solid #414141;
  text-align: center;
  line-height: 15px;
  flex: none;
}
.zoom-dd { width: 65px; flex: none; }
.zoom-dd .dd-text { padding-left: 4px; }
.res-dd { width: 85px; flex: none; }
.cam-dd { width: 104px; flex: none; }
.view-dd { width: 69px; flex: none; }
.exposure {
  margin-left: 2px;
  color: #9d9a5a;
  border-bottom: 1px dotted #8f8c50;
  line-height: 12px;
}

/* right panels */
.right-col {
  display: flex;
  flex-direction: column;
  gap: 5px;
  min-height: 0;
}
.right-col .tab.active {
  padding-left: 3px;
  width: 79px;
  gap: 4px;
}
.right-col .panel-menu {
  right: 3px;
}
.paragraph {
  height: 97px;
  flex: none;
}
.align-row {
  display: flex;
  height: 25px;
  margin: 5px 6px 0 8px;
  padding-bottom: 2px;
  border-bottom: 1px solid #545454;
}
.abtn {
  width: 25px;
  display: flex;
  justify-content: center;
  align-items: center;
  height: 18px;
}
.abtn svg {
  width: 18px;
  height: 14px;
}
.abtn.on {
  width: 19px;
  margin-right: 3px;
  background: #4a4a4a;
  border: 1px solid #262626;
}
.abtn.gap {
  margin-left: 5px;
}
.abtn.gap:last-child {
  margin-left: 4px;
}
.para-grid {
  display: grid;
  grid-template-columns: 16px 44px 16px 37px 16px auto;
  column-gap: 6px;
  row-gap: 4px;
  align-items: center;
  margin: 3px 0 0 6px;
  line-height: 14px;
  white-space: nowrap;
}
.para-grid svg {
  width: 16px;
  height: 12px;
}
.num {
  font-weight: normal;
  color: #a9a35f;
  border-bottom: 1px dotted #9a9555;
}
.character {
  flex: 1;
}
.font-block {
  height: 56px;
  flex: none;
  position: relative;
  padding: 9px 0 0 6px;
  display: flex;
  flex-direction: column;
  gap: 7px;
}
.font-dd {
  width: 120px;
  flex: none;
}
.dropper {
  position: absolute;
  left: 137px;
  top: 10px;
  width: 14px;
  height: 16px;
}
.fill-stroke {
  position: absolute;
  left: 133px;
  width: 18px;
  height: 9px;
}
.fill-stroke.black { top: 32px; background: #000; }
.fill-stroke.white { top: 41px; background: #fff; }
.stroke-none {
  position: absolute;
  left: 157px;
  top: 37px;
  width: 10px;
  height: 11px;
  background: linear-gradient(135deg, #fff 0 42%, #a03050 42% 58%, #fff 58%);
}
.color-front, .color-back, .color-notch {
  position: absolute;
}
.color-front {
  left: 158px;
  top: 7px;
  width: 28px;
  height: 28px;
  background: #000;
  z-index: 1;
}
.color-back {
  left: 171px;
  top: 21px;
  width: 27px;
  height: 27px;
  background: #fff;
}
.color-notch {
  left: 180px;
  top: 28px;
  width: 11px;
  height: 12px;
  background: #5d5d5d;
}
.swap {
  position: absolute;
  right: 0;
  top: 6px;
  width: 8px;
  height: 10px;
}
.char-rows {
  display: grid;
  grid-template-columns: 25px 40px 16px 57px 40px 15px;
  grid-auto-rows: 21px;
  align-items: center;
  padding: 1px 0 0 5px;
  border-top: 1px solid #555;
  border-bottom: 1px solid #555;
  height: 51px;
  flex: none;
}
.ci {
  width: 18px;
  height: 16px;
  overflow: visible;
}
.char-rows .ci:nth-of-type(even) {
  justify-self: center;
}
.t-lg {
  font-family: 'Liberation Serif', serif;
  font-size: 14px;
  font-weight: bold;
  fill: #e6e6e6;
}
.t-sm {
  font-family: 'Liberation Serif', 'Noto Sans CJK JP', serif;
  font-size: 9px;
  fill: #e6e6e6;
}
.t-av {
  font-family: 'DejaVu Sans', sans-serif;
  font-size: 9px;
  fill: #eee;
}
.metrics {
  color: #8f8f8f;
  border-bottom: 1px dotted #8f8f8f;
  justify-self: start;
  line-height: 12px;
}
.tri {
  width: 0;
  height: 0;
  border: 4px solid transparent;
  border-top: 6px solid #e6e6e6;
  border-bottom: 0;
  justify-self: center;
}
.stroke-row {
  height: 29px;
  flex: none;
  display: grid;
  grid-template-columns: 25px 40px 16px 1fr;
  align-items: center;
  padding-left: 5px;
}
.stroke-dd {
  margin-left: 1px;
}
.scale-rows {
  height: 53px;
  padding-top: 3px;
  grid-auto-rows: 22px;
}
.style-row {
  display: flex;
  padding-left: 25px;
  margin-top: 6px;
  gap: 2px;
}
.sbtn {
  width: 23px;
  height: 19px;
  display: flex;
  align-items: center;
  justify-content: center;
  font-family: 'Liberation Serif', serif;
  font-size: 12px;
  font-weight: bold;
  color: #e6e6e6;
}
.sbtn.on {
  background: #505050;
  border: 1px solid #272727;
}
.sbtn.ital {
  font-style: italic;
  margin-right: 4px;
}
.sbtn.far {
  margin-left: 7px;
}
.sbtn sup, .sbtn sub {
  font-size: 7px;
}
.sbtn small {
  font-size: 9px;
}

/* timeline tabs */
.tl-tabs {
  height: 26px;
  padding-top: 5px;
  background: #3a3a3a;
  display: flex;
  position: relative;
  color: #838383;
  border-bottom: 1px solid #a7a14f;
}
.tl-tab {
  display: flex;
  flex: none;
  align-items: center;
  gap: 4px;
  padding-left: 13px;
  background: #535353;
  border-right: 1px solid #3d3d3d;
  white-space: nowrap;
}
.tl-tab.first {
  padding-left: 9px;
  width: 100px;
}
.t-intro { width: 68px; }
.t-example { width: 169px; gap: 10px; }
.t-ball { width: 96px; }
.t-perks { width: 70px; padding-left: 12px; }
.t-garden { width: 151px; padding-left: 12px; }
.t-ball2 { width: 104px; padding-left: 12px; }
.tl-tab.current {
  width: 108px;
  background: #656565;
  color: #cdcdcd;
  padding-left: 3px;
  border: 1px solid #a7a14f;
  border-bottom: 0;
}
.tl-tabs > svg.panel-menu {
  right: 3px;
  top: 9px;
}
.tl-tabs::after {
  content: "";
  flex: 1;
  background: #515151;
}

/* timeline */
.timeline {
  height: 162px;
  position: relative;
  display: grid;
  grid-template-columns: 678px 602px;
  background: #6e6e6e;
  overflow: hidden;
}
.tl-left {
  border-right: 1px solid #505050;
}
.tl-controls {
  height: 35px;
  display: flex;
  align-items: center;
  padding-left: 9px;
  background: #666;
  border-bottom: 1px solid #3b3b3b;
}
.timecode {
  width: 97px;
  padding-top: 1px;
  font-size: 15px;
  color: #b4ae55;
  letter-spacing: -.2px;
}
.layer-search {
  width: 191px;
  height: 17px;
  background: #ababab;
  border: 1px solid #202020;
  padding: 1px 0 0 2px;
}
.layer-search svg {
  width: 13px;
  height: 13px;
}
.tl-switches {
  display: flex;
  align-items: center;
  margin-left: 109px;
  height: 24px;
}
.sw {
  width: 26px;
  height: 24px;
  flex: none;
  display: flex;
  justify-content: center;
  align-items: center;
}
.sw.sep {
  margin-left: 9px;
}
.sw svg {
  width: 20px;
  height: 18px;
}
.sw.on {
  background: #4c4c4c;
  border: 1px solid #2a2a2a;
}
.col-head {
  height: 19px;
  display: flex;
  align-items: center;
  padding-top: 2px;
  background: linear-gradient(#787878, #6c6c6c);
  border-bottom: 1px solid #3e3e3e;
  position: relative;
  font-size: 8.6px;
  color: #a6a6a6;
}
.head-a {
  display: flex;
  align-items: center;
  width: 66px;
  padding-left: 4px;
  gap: 3px;
  border-right: 1px solid #5c5c5c;
  height: 14px;
}
.head-a svg {
  width: 13px;
  height: 10px;
}
.head-a .dot {
  width: 8px;
  height: 8px;
  margin: 0 2px;
  border-radius: 50%;
  background: #ccc;
}
.head-a .lk {
  width: 11px;
  height: 12px;
}
.tag {
  width: 16px;
  height: 14px;
  margin-left: 13px;
}
.hash {
  margin-left: 5px;
  width: 31px;
  padding-left: 4px;
  border-left: 1px solid #5c5c5c;
}
.src-name {
  width: 276px;
  padding-left: 6px;
  border-left: 1px solid #5c5c5c;
}
.head-b {
  display: flex;
  align-items: center;
  gap: 3px;
  width: 137px;
  height: 14px;
  padding-left: 6px;
  color: #ccc;
  border-right: 1px solid #5c5c5c;
}
.head-b svg {
  width: 12px;
  height: 11px;
  flex: none;
}
.head-b em {
  font-family: 'Liberation Serif', serif;
  font-size: 11px;
  width: 12px;
}
.head-b .slash {
  width: 12px;
  height: 11px;
  background: linear-gradient(45deg, transparent 45%, #ccc 45% 55%, transparent 55%);
}
.round {
  width: 12px;
  height: 12px;
  border-radius: 50%;
  flex: none;
}
.round.lt { background: #bbb; }
.round.half { background: linear-gradient(135deg, #222 50%, #ddd 50%); }
.parent-label {
  padding-left: 5px;
}

.layer {
  display: grid;
  grid-template-columns: 18px 15px 15px 15px 20px 15px 20px 32px 257px 20px 14px 17px 28px 15px 15px 15px 17px 16px 88px;
  align-items: center;
  height: 17px;
  font-size: 10.2px;
}
.layer.odd {
  background: #616161;
}
.box {
  height: 14px;
  width: 13px;
  justify-self: center;
  border: 1px solid #5a5a5a;
  border-bottom-color: #8e8e8e;
}
.box.clear {
  border-color: transparent;
}
.eye {
  width: 13px;
  height: 10px;
  justify-self: center;
}
.twirl {
  width: 0;
  height: 0;
  justify-self: center;
  margin-left: 2px;
  border: 4px solid transparent;
  border-left: 6px solid #a5a5a5;
  border-right: 0;
}
.layer .swatch {
  justify-self: start;
  margin-left: 2px;
}
.idx {
  text-align: center;
  color: #d0d0d0;
  padding-top: 1px;
}
.comp-ic {
  width: 16px;
  height: 14px;
  justify-self: end;
  margin-right: 1px;
}
.lname {
  font-weight: bold;
  padding: 2px 0 0 3px;
  line-height: 15px;
  color: #d9d9d9;
}
.lname.sel {
  background: #dadada;
  color: #2b2b2b;
}
.shy {
  width: 14px;
  height: 8px;
  justify-self: center;
}
.slashed {
  background: linear-gradient(135deg, transparent 45%, #ddd 45% 55%, transparent 55%);
}
.spiral {
  width: 13px;
  height: 13px;
}
.parent-dd {
  height: 14px;
  margin-left: 4px;
  width: 88px;
}
.parent-dd .dd-text {
  line-height: 12px;
}
.parent-dd .dd-arrow::after {
  top: 3px;
}

.tl-right {
  position: relative;
  padding-left: 2px;
  background: #6e6e6e;
  overflow: hidden;
}
.work-bar {
  height: 9px;
  margin: 4px 10px 0 1px;
  background: #9a9a9a;
  display: flex;
  justify-content: space-between;
}
.cap {
  width: 5px;
  background: #c79a2e;
}
.cap.tall {
  width: 6px;
  border: 1px solid #222;
  background: repeating-linear-gradient(90deg, #d3a12f 0 1px, #6e5a20 1px 2px);
}
.ruler {
  height: 22px;
  margin-left: -2px;
  display: flex;
  background: #656565;
  border-bottom: 1px solid #2c2c2c;
  border-top: 1px solid #2c2c2c;
  padding-top: 3px;
  font-size: 10px;
  color: #c9c9c9;
}
.ruler span {
  flex: 0 0 57.7px;
  text-align: center;
  position: relative;
}
.ruler span:first-child {
  flex-basis: 36px;
  padding-left: 5px;
  text-align: left;
}
.ruler span:not(:first-child)::after {
  content: "";
  position: absolute;
  left: 28px;
  bottom: 1px;
  width: 1px;
  height: 4px;
  background: #d8d8d8;
}
.work-area {
  height: 19px;
  margin: 0 10px 0 1px;
  background: #9a9a9a;
  display: flex;
  justify-content: space-between;
  border-bottom: 1px solid #3a3a3a;
}
.track {
  height: 17px;
  margin-right: 18px;
  padding-left: 6px;
}
.clip {
  height: 16px;
  background: #a2997f;
  position: relative;
}
.clip.lite {
  background: #b6ae99;
}
.clip::before, .clip::after {
  content: "";
  position: absolute;
  top: 0;
  border: 3px solid transparent;
}
.clip::before {
  left: 0;
  border-left-color: #2a2a2a;
  border-top-color: #2a2a2a;
}
.clip::after {
  right: 0;
  border-right-color: #2a2a2a;
  border-top-color: #2a2a2a;
}
.rail {
  position: absolute;
  right: 0;
  top: 32px;
  width: 9px;
  bottom: 0;
  display: flex;
  flex-direction: column;
  gap: 3px;
  background: #727272;
}
.rail-btn {
  height: 17px;
  background: #8a8a8a;
  border-left: 1px solid #555;
}
.playhead {
  position: absolute;
  left: 685px;
  top: 18px;
  bottom: 16px;
  width: 1px;
  background: #d2453f;
}
.cti {
  position: absolute;
  left: -5px;
  top: 0;
  width: 11px;
  height: 14px;
  background: #e0b436;
  clip-path: polygon(0 0, 100% 0, 100% 60%, 50% 100%, 0 60%);
}

/* bottom bar */
.statusbar {
  position: absolute;
  left: 0;
  right: 0;
  bottom: 0;
  height: 16px;
  background: #696969;
  border-top: 1px solid #505050;
  display: flex;
  align-items: center;
}
.status-icons {
  display: flex;
  width: 413px;
  padding-left: 3px;
  gap: 4px;
}
.sq {
  width: 15px;
  height: 15px;
  display: flex;
  justify-content: center;
  align-items: center;
}
.sq svg {
  width: 13px;
  height: 13px;
}
.sq.on {
  background: #444;
}
.toggle-btn {
  width: 125px;
  height: 14px;
  text-align: center;
  line-height: 12px;
  font-size: 9.5px;
  background: #6e6e6e;
  border: 1px solid #474747;
}
.tl-zoom {
  display: flex;
  align-items: center;
  margin-left: 144px;
  width: 103px;
}
.m-sm {
  width: 11px;
  height: 8px;
}
.m-lg {
  width: 17px;
  height: 11px;
  margin-left: 12px;
}
.slider {
  width: 46px;
  height: 4px;
  margin-left: 9px;
  background: #2e2e2e;
  border: 1px solid #222;
  position: relative;
}
.slider i {
  position: absolute;
  left: -2px;
  top: -4px;
  width: 6px;
  height: 10px;
  background: #8e8e8e;
  border-radius: 2px 2px 0 0;
}
.hscroll {
  flex: 1;
  margin-right: 10px;
  height: 15px;
  background: #565656;
  display: flex;
  align-items: center;
  justify-content: space-between;
  padding: 0 4px;
}
.sl, .sr {
  width: 0;
  height: 0;
  border: 5px solid transparent;
}
.sl { border-right: 4px solid #8c8c8c; border-left: 0; }
.sr { border-left: 4px solid #8c8c8c; border-right: 0; }

.pointer {
  position: absolute;
  left: 5px;
  top: 598px;
  width: 13px;
  height: 19px;
}
```
